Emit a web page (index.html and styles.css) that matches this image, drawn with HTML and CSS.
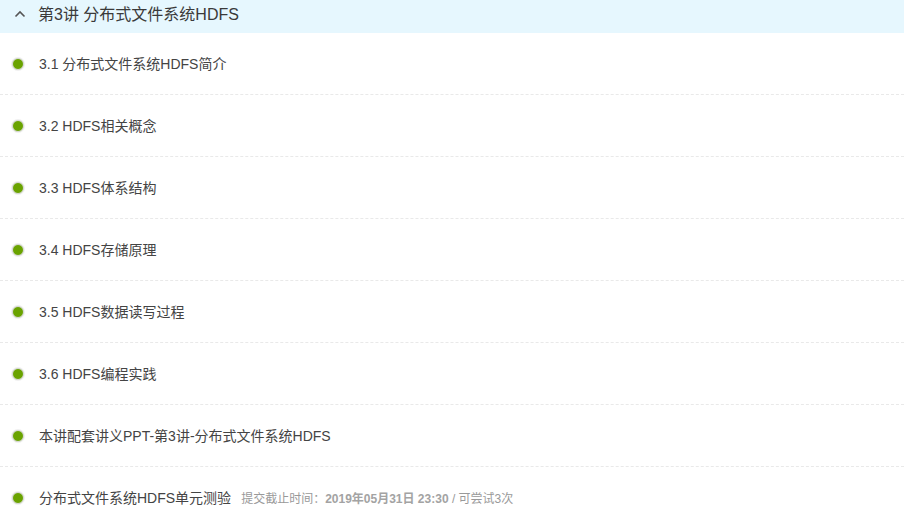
FILE: index.html
```html
<!DOCTYPE html>
<html lang="zh-CN">
<head>
<meta charset="utf-8">
<link rel="stylesheet" href="styles.css">
</head>
<body>
<div class="chapter">
  <div class="chapter-head">
    <svg class="chev" width="12" height="8" viewBox="0 0 12 8"><path d="M1.5 6.5 L6 2 L10.5 6.5" fill="none" stroke="#555" stroke-width="1.6"/></svg>
    <span class="chapter-title">第3讲 分布式文件系统HDFS</span>
  </div>
  <ul class="lessons">
    <li class="lesson"><span class="dot"></span><span class="name">3.1 分布式文件系统HDFS简介</span></li>
    <li class="lesson"><span class="dot"></span><span class="name">3.2 HDFS相关概念</span></li>
    <li class="lesson"><span class="dot"></span><span class="name">3.3 HDFS体系结构</span></li>
    <li class="lesson"><span class="dot"></span><span class="name">3.4 HDFS存储原理</span></li>
    <li class="lesson"><span class="dot"></span><span class="name">3.5 HDFS数据读写过程</span></li>
    <li class="lesson"><span class="dot"></span><span class="name">3.6 HDFS编程实践</span></li>
    <li class="lesson"><span class="dot"></span><span class="name">本讲配套讲义PPT-第3讲-分布式文件系统HDFS</span></li>
    <li class="lesson"><span class="dot"></span><span class="name">分布式文件系统HDFS单元测验</span><span class="meta">提交截止时间：<b>2019年05月31日 23:30</b> / 可尝试3次</span></li>
  </ul>
</div>
</body>
</html>
```
FILE: styles.css
```css
html, body {
  margin: 0;
  padding: 0;
  background: #fff;
  font-family: "Liberation Sans", "Noto Sans CJK SC", sans-serif;
}
.chapter-head {
  height: 33px;
  background: #e6f7fe;
  display: flex;
  align-items: center;
  padding-left: 14px;
}
.chev {
  margin-right: 12px;
  margin-top: -5px;
}
.chapter-title {
  font-size: 16px;
  color: #3a3a3a;
  margin-top: -8px;
}
.lessons {
  list-style: none;
  margin: 0;
  padding: 0;
}
.lesson {
  height: 61px;
  border-bottom: 1px dashed #e9e9e9;
  display: flex;
  align-items: center;
}
.dot {
  width: 10px;
  height: 10px;
  border-radius: 50%;
  background: #6aa300;
  border: 1px solid #d9d9d9;
  margin-left: 12px;
  margin-right: 15px;
  box-shadow: 0 0 0 1px #f0f0f0;
}
.name {
  font-size: 14px;
  color: #444;
  margin-top: -1px;
}
.meta {
  font-size: 12px;
  color: #999;
  margin-left: 10px;
  margin-top: -1px;
}
.meta b {
  font-weight: bold;
  color: #a3a3a3;
}
```
